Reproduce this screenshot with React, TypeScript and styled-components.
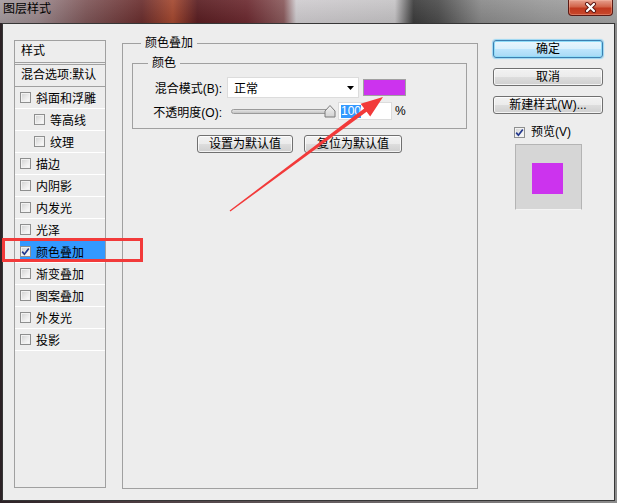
import React from 'react';
import styled, { createGlobalStyle } from 'styled-components';

const GlobalStyle = createGlobalStyle`
  html, body {
    margin: 0;
    padding: 0;
    background: #5a5a5a;
  }
  body {
    font-family: "Liberation Sans", "Noto Sans CJK SC", sans-serif;
    font-size: 12px;
    color: #000;
  }
  * {
    box-sizing: border-box;
  }
`;

const Screen = styled.div`
  position: relative;
  width: 617px;
  height: 503px;
  overflow: hidden;
  display: flex;
  flex-direction: column;
  background: linear-gradient(90deg, #2c2226 0%, #4a3a3e 20%, #6a6466 60%, #8c8c8c 100%);
`;

const TitleBar = styled.div`
  height: 23px;
  flex: none;
  display: flex;
  justify-content: space-between;
  align-items: flex-start;
  padding-left: 3px;
  background:
    linear-gradient(180deg, rgba(255, 255, 255, 0.08) 0%, rgba(0, 0, 0, 0.08) 100%),
    linear-gradient(
      90deg,
      #a49a9e 0%,
      #9c8a8e 6%,
      #7e5658 14%,
      #6a2e2e 23%,
      #a4482f 28%,
      #5a1e22 32%,
      #6c2a30 40%,
      #8a5a5c 46%,
      #cfcccf 48%,
      #c6c4c6 64%,
      #3c3c3c 67%,
      #4c4c4c 71%,
      #8a8a8a 78%,
      #9a9a9a 88%,
      #a4a4a4 100%
    );
`;

const TitleText = styled.div`
  padding-top: 2px;
  line-height: 15px;
  font-size: 12px;
  color: #000;
`;

const CloseButton = styled.div`
  width: 45px;
  height: 16px;
  margin-right: 4px;
  display: flex;
  align-items: center;
  justify-content: center;
  border: 1px solid #5c1a14;
  border-top: none;
  border-radius: 0 0 4px 4px;
  background: linear-gradient(180deg, #e6a08e 0%, #d2644a 45%, #c0391f 55%, #c8482c 100%);
  box-shadow: inset 0 0 0 1px rgba(255, 200, 180, 0.35);
`;

const Client = styled.div`
  flex: 1;
  margin: 0 2px 2px 2px;
  border: 1px solid #363636;
  background: #ededed;
  display: flex;
  align-items: flex-start;
  padding: 11px 11px 0 11px;
`;

/* ---------- left style list ---------- */

const StyleList = styled.div`
  margin-top: 5px;
  width: 92px;
  height: 448px;
  flex: none;
  border: 1px solid #a0a0a0;
  background: #ededed;
`;

const ListHeader = styled.div`
  height: 24px;
  padding-left: 6px;
  line-height: 21px;
  border-bottom: 3px double #a0a0a0;
`;

const ListBlend = styled.div`
  height: 22px;
  padding-left: 6px;
  line-height: 21px;
  border-bottom: 1px solid #a0a0a0;
  white-space: nowrap;
`;

const ListRow = styled.div<{ $indent?: boolean; $selected?: boolean }>`
  height: 22px;
  display: flex;
  align-items: center;
  gap: 5px;
  padding-left: ${(p) => (p.$indent ? 19 : 5)}px;
  padding-bottom: 1px;
  border-bottom: 1px solid #ffffff;
  background: ${(p) => (p.$selected ? '#3399ff' : 'transparent')};
  background-clip: content-box;
  white-space: nowrap;
`;

const CheckBox = styled.span`
  width: 11px;
  height: 11px;
  flex: none;
  display: flex;
  align-items: center;
  justify-content: center;
  border: 1px solid #8e8f8f;
  background: linear-gradient(135deg, #cfd0d0 0%, #e9e9e9 50%, #ffffff 100%);
  box-shadow: inset 0 0 0 1px #f2f2f2;
`;

/* ---------- main group ---------- */

const GroupBox = styled.fieldset<{ $w: number; $h?: number; $pad: string }>`
  margin: 0;
  min-width: 0;
  width: ${(p) => p.$w}px;
  ${(p) => (p.$h ? `height: ${p.$h}px;` : '')}
  border: 1px solid #a0a0a0;
  padding: ${(p) => p.$pad};
  flex: none;
`;

const GroupLegend = styled.legend<{ $offset: number }>`
  padding: 0 4px;
  margin-left: ${(p) => p.$offset}px;
  line-height: 16px;
  font-size: 12px;
`;

const MainGroup = styled(GroupBox)`
  margin-left: 16px;
`;

const FieldRow = styled.div<{ $top?: number }>`
  display: flex;
  align-items: center;
  margin-top: ${(p) => p.$top ?? 0}px;
`;

const FieldLabel = styled.label`
  width: 90px;
  padding-right: 1px;
  text-align: right;
  white-space: nowrap;
`;

const SelectBox = styled.div`
  margin-left: 4px;
  width: 132px;
  height: 21px;
  display: flex;
  align-items: center;
  justify-content: space-between;
  padding: 0 4px 0 6px;
  background: #ffffff;
  border: 1px solid #dcdcdc;
`;

const Swatch = styled.div`
  margin-left: 4px;
  width: 43px;
  height: 17px;
  background: #cc33ee;
  border: 1px solid #a0a0a0;
`;

const SliderBox = styled.div`
  position: relative;
  margin-left: 8px;
  width: 105px;
  height: 18px;
  display: flex;
  align-items: center;
`;

const SliderTrack = styled.div`
  width: 102px;
  height: 5px;
  border: 1px solid #9a9a9a;
  border-radius: 3px;
  background: linear-gradient(180deg, #e4e4e4 0%, #c4c4c4 100%);
`;

const SliderThumb = styled.svg`
  position: absolute;
  left: 93px;
  top: 2px;
`;

const NumberInput = styled.div`
  margin-left: 2px;
  width: 54px;
  height: 18px;
  padding-left: 2px;
  display: flex;
  align-items: center;
  background: #ffffff;
  border: 1px solid #dcdcdc;
`;

const Selected = styled.span`
  background: #3399ff;
  color: #ffffff;
  line-height: 13px;
`;

const Percent = styled.span`
  margin-left: 3px;
`;

const ButtonRow = styled.div`
  margin-top: 6px;
  display: flex;
  justify-content: center;
  gap: 11px;
`;

const Button = styled.button<{ $w: number; $primary?: boolean }>`
  width: ${(p) => p.$w}px;
  height: 18px;
  padding: 0;
  font-family: inherit;
  font-size: 12px;
  line-height: 16px;
  color: #000;
  border: 1px solid ${(p) => (p.$primary ? '#3c7fb1' : '#707070')};
  border-radius: 3px;
  background: ${(p) =>
    p.$primary
      ? 'linear-gradient(180deg, #eaf6fd 0%, #d9f0fc 50%, #bee6fd 51%, #a7d9f5 100%)'
      : 'linear-gradient(180deg, #f2f2f2 0%, #ebebeb 50%, #dddddd 51%, #cfcfcf 100%)'};
  box-shadow: ${(p) =>
    p.$primary ? 'inset 0 0 0 1px #8fdcf8, 0 0 1px 1px #9ad6f2' : 'inset 0 0 0 1px rgba(255,255,255,0.75)'};
  white-space: nowrap;
`;

/* ---------- right column ---------- */

const SideColumn = styled.div`
  margin-top: 5px;
  margin-left: 15px;
  width: 110px;
  flex: none;
  display: flex;
  flex-direction: column;
  gap: 10px;
`;

const PreviewCheck = styled.div`
  margin-top: 1px;
  padding-left: 21px;
  display: flex;
  align-items: center;
  gap: 6px;
  line-height: 14px;
`;

const PreviewBox = styled.div`
  margin-top: -5px;
  margin-left: 22px;
  width: 67px;
  height: 66px;
  display: flex;
  align-items: center;
  justify-content: center;
  background: #d6d6d6;
  border: 1px solid #b4b4b4;
  border-bottom-color: #f4f4f4;
`;

const PreviewSquare = styled.div`
  width: 31px;
  height: 31px;
  margin: 2px 2px 0 0;
  background: #cc33ee;
`;

/* ---------- annotations ---------- */

const Highlight = styled.div`
  position: absolute;
  left: 2px;
  top: 238px;
  width: 141px;
  height: 24px;
  border: 3px solid #f23a3a;
  pointer-events: none;
`;

const ArrowLayer = styled.svg`
  position: absolute;
  left: 0;
  top: 0;
  pointer-events: none;
`;

const Tick = () => (
  <svg width="9" height="9" viewBox="0 0 9 9">
    <path d="M1.2 4.6 L3.4 7.2 L7.8 1.4" fill="none" stroke="#23388c" strokeWidth="1.7" />
  </svg>
);

const DropArrow = () => (
  <svg width="7" height="4" viewBox="0 0 7 4">
    <path d="M0 0 H7 L3.5 4 Z" fill="#000" />
  </svg>
);

const layers: { name: string; indent?: boolean; checked?: boolean }[] = [
  { name: '斜面和浮雕' },
  { name: '等高线', indent: true },
  { name: '纹理', indent: true },
  { name: '描边' },
  { name: '内阴影' },
  { name: '内发光' },
  { name: '光泽' },
  { name: '颜色叠加', checked: true },
  { name: '渐变叠加' },
  { name: '图案叠加' },
  { name: '外发光' },
  { name: '投影' },
];

const App: React.FC = () => {
  return (
    <>
      <GlobalStyle />
      <Screen>
        <TitleBar>
          <TitleText>图层样式</TitleText>
          <CloseButton>
            <svg width="13" height="11" viewBox="0 0 13 11">
              <path d="M3 2 L10 9 M10 2 L3 9" stroke="#5a1410" strokeWidth="4" strokeLinecap="round" />
              <path d="M3 2 L10 9 M10 2 L3 9" stroke="#ffffff" strokeWidth="2.2" strokeLinecap="round" />
            </svg>
          </CloseButton>
        </TitleBar>

        <Client>
          <StyleList>
            <ListHeader>样式</ListHeader>
            <ListBlend>混合选项:默认</ListBlend>
            {layers.map((l) => (
              <ListRow key={l.name} $indent={l.indent} $selected={l.checked}>
                <CheckBox>{l.checked && <Tick />}</CheckBox>
                {l.name}
              </ListRow>
            ))}
          </StyleList>

          <MainGroup $w={356} $h={454} $pad="4px 10px 0 9px">
            <GroupLegend $offset={9}>颜色叠加</GroupLegend>
            <GroupBox $w={335} $pad="6px 0 8px 0">
              <GroupLegend $offset={15}>颜色</GroupLegend>
              <FieldRow>
                <FieldLabel>混合模式(B):</FieldLabel>
                <SelectBox>
                  <span>正常</span>
                  <DropArrow />
                </SelectBox>
                <Swatch />
              </FieldRow>
              <FieldRow $top={4}>
                <FieldLabel>不透明度(O):</FieldLabel>
                <SliderBox>
                  <SliderTrack />
                  <SliderThumb width="12" height="14" viewBox="0 0 12 14">
                    <defs>
                      <linearGradient id="thumb" x1="0" y1="0" x2="0" y2="1">
                        <stop offset="0" stopColor="#f4f4f4" />
                        <stop offset="1" stopColor="#d2d2d2" />
                      </linearGradient>
                    </defs>
                    <path d="M1 13 H11 V7 L6 1.5 L1 7 Z" fill="url(#thumb)" stroke="#7a7a7a" strokeLinejoin="round" />
                  </SliderThumb>
                </SliderBox>
                <NumberInput>
                  <Selected>100</Selected>
                </NumberInput>
                <Percent>%</Percent>
              </FieldRow>
            </GroupBox>
            <ButtonRow>
              <Button $w={96}>设置为默认值</Button>
              <Button $w={98}>复位为默认值</Button>
            </ButtonRow>
          </MainGroup>

          <SideColumn>
            <Button $w={110} $primary>确定</Button>
            <Button $w={110}>取消</Button>
            <Button $w={110}>新建样式(W)...</Button>
            <PreviewCheck>
              <CheckBox>
                <Tick />
              </CheckBox>
              预览(V)
            </PreviewCheck>
            <PreviewBox>
              <PreviewSquare />
            </PreviewBox>
          </SideColumn>
        </Client>

        <Highlight />
        <ArrowLayer width="617" height="503" viewBox="0 0 617 503">
          <polygon
            points="229.6,210.5 364.2,108.5 360.6,103.7 383,97 370.2,116.5 366.6,111.7 230.4,211.5"
            fill="#f23a3a"
          />
        </ArrowLayer>
      </Screen>
    </>
  );
};

export default App;
